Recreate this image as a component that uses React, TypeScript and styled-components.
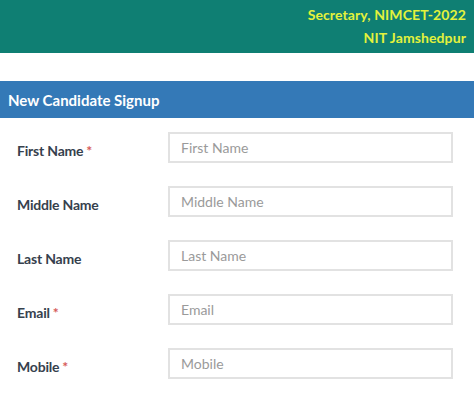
import React from 'react';
import styled, { createGlobalStyle } from 'styled-components';

const GlobalStyle = createGlobalStyle`
  html, body {
    margin: 0;
    padding: 0;
    background: #ffffff;
    font-family: Lato, "Open Sans", sans-serif;
  }
  * { box-sizing: border-box; }
`;

const TopBar = styled.header`
  height: 53px;
  background: #0f7f73;
  display: flex;
  flex-direction: column;
  align-items: flex-end;
  justify-content: center;
  padding: 0 8px 0 0;
  gap: 3px;
`;

const TopLine = styled.div`
  color: #e3f23c;
  font-weight: 700;
  font-size: 14px;
  line-height: 20px;
  letter-spacing: 0.1px;
`;

const Panel = styled.section`
  margin-top: 28px;
`;

const PanelHeading = styled.h2`
  margin: 0;
  height: 37px;
  background: #3479b7;
  color: #ffffff;
  font-size: 15px;
  font-weight: 700;
  display: flex;
  align-items: center;
  padding: 0 8px;
`;

const Form = styled.form`
  display: flex;
  flex-direction: column;
  gap: 23px;
  padding: 14px 21px 0 17px;
`;

const Row = styled.div`
  display: grid;
  grid-template-columns: 151px 1fr;
  align-items: center;
`;

const Label = styled.label`
  color: #36414d;
  font-size: 14px;
  font-weight: 700;
  letter-spacing: -0.2px;
  padding-top: 6px;
`;

const Star = styled.span`
  color: #d65a58;
  margin-left: 3px;
`;

const Input = styled.input`
  height: 31px;
  width: 100%;
  border: 2px solid #e2e2e2;
  background: #ffffff;
  padding: 0 11px;
  font-family: inherit;
  font-size: 14px;
  color: #555;
  outline: none;
  &::placeholder {
    color: #9a9a9a;
  }
`;

const fields = [
  { label: 'First Name', required: true },
  { label: 'Middle Name', required: false },
  { label: 'Last Name', required: false },
  { label: 'Email', required: true },
  { label: 'Mobile', required: true },
];

export default function App() {
  return (
    <>
      <GlobalStyle />
      <TopBar>
        <TopLine>Secretary, NIMCET-2022</TopLine>
        <TopLine>NIT Jamshedpur</TopLine>
      </TopBar>
      <Panel>
        <PanelHeading>New Candidate Signup</PanelHeading>
        <Form>
          {fields.map((f) => (
            <Row key={f.label}>
              <Label>
                {f.label}
                {f.required && <Star>*</Star>}
              </Label>
              <Input placeholder={f.label} />
            </Row>
          ))}
        </Form>
      </Panel>
    </>
  );
}
